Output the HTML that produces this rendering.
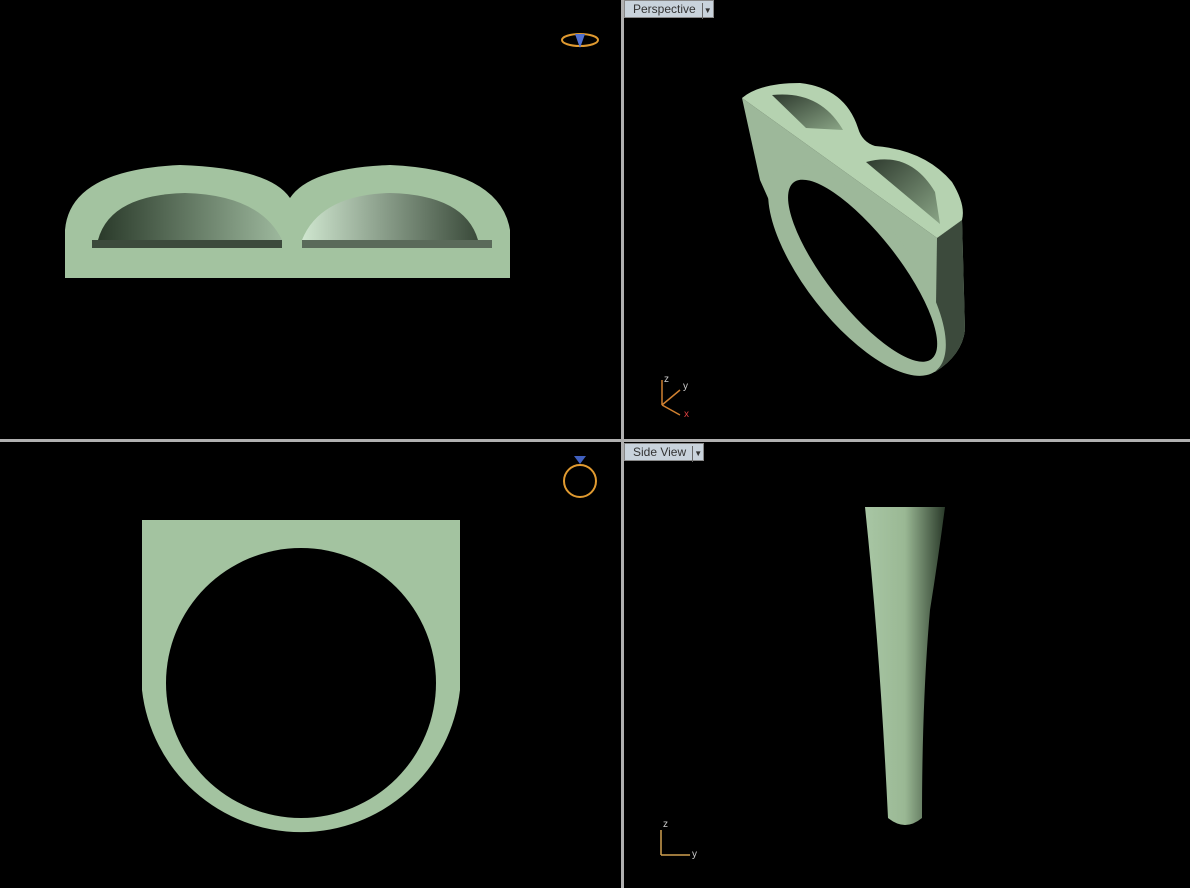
<!DOCTYPE html>
<html><head><style>
body{margin:0;background:#000;width:1190px;height:888px;overflow:hidden;position:relative;font-family:"Liberation Sans",sans-serif}
.lbl{position:absolute;background:#c9d3dc;color:#333;font-size:12px;height:16px;line-height:16px;padding:0 0 0 8px;border:1px solid #888}
.lbl span{display:inline-block;border-left:1px solid #666;width:10px;margin-left:6px;text-align:center;font-size:8px}
</style></head><body>
<svg width="1190" height="888" style="position:absolute;left:0;top:0">
<defs>
<linearGradient id="g1" x1="0" x2="1"><stop offset="0" stop-color="#2a3a2a"/><stop offset="1" stop-color="#9db89d"/></linearGradient>
<linearGradient id="g2" x1="0" x2="1"><stop offset="0" stop-color="#cfe6cf"/><stop offset="1" stop-color="#3a4a3a"/></linearGradient>
<linearGradient id="g3" x1="0" x2="1"><stop offset="0" stop-color="#a8c6a4"/><stop offset="0.5" stop-color="#9ab894"/><stop offset="1" stop-color="#2a3a2a"/></linearGradient>
<linearGradient id="g4" x1="0" x2="1" y1="0" y2="1"><stop offset="0" stop-color="#2e3a2e"/><stop offset="1" stop-color="#8aa586"/></linearGradient>
</defs>
<!-- top-left -->
<path d="M65 278 L65 230 Q70 170 180 165 Q270 168 290 198 Q310 168 390 165 Q500 170 510 230 L510 278Z" fill="#a3c3a0"/>
<path d="M98 240 Q110 195 185 193 Q260 195 282 240Z" fill="url(#g1)"/>
<path d="M302 240 Q320 195 390 193 Q465 195 478 240Z" fill="url(#g2)"/>
<rect x="92" y="240" width="190" height="8" fill="#3c4a3c"/>
<rect x="302" y="240" width="190" height="8" fill="#5a6a5a"/>
<!-- perspective -->
<path d="M742 98 L937 238 L962 220 L965 330 Q962 355 935 372 L900 350 L800 270 L760 180Z" fill="#9db89a"/>
<path d="M937 238 L962 220 L965 330 Q962 355 935 372Z" fill="#3c4a3c"/>
<g transform="translate(857 270) rotate(52)">
<ellipse rx="128" ry="52" fill="#9db89a"/>
<ellipse rx="112" ry="36" cx="4" cy="-4" fill="#000"/>
</g>
<path d="M742 98 Q760 83 800 83 Q845 88 858 128 Q862 142 875 146 Q925 150 952 182 Q966 205 962 220 L937 238 Z" fill="#b5d2b0"/>
<path d="M772 95 Q820 90 843 130 L806 128 Z" fill="url(#g4)"/>
<path d="M866 162 Q910 150 935 192 L940 224 Z" fill="url(#g4)"/>
<!-- bottom-left -->
<path d="M142 520 L460 520 L460 690 A160 160 0 0 1 142 690Z" fill="#a3c3a0"/>
<circle cx="301" cy="683" r="135" fill="#000"/>
<!-- bottom-right -->
<path d="M865 507 L945 507 Q938 560 930 610 Q922 700 922 818 Q905 832 888 818 Q880 650 865 507Z" fill="url(#g3)"/>
<!-- gizmos -->
<ellipse cx="580" cy="40" rx="18" ry="6" fill="none" stroke="#e09a30" stroke-width="2"/>
<path d="M575 34 L585 34 L580 48Z" fill="#5070d0"/>
<circle cx="580" cy="481" r="16" fill="none" stroke="#e09a30" stroke-width="2"/>
<path d="M574 456 L586 456 L580 464Z" fill="#4060c0"/>
<path d="M662 405 L662 380 M662 405 L680 390 M662 405 L680 415" stroke="#d08030" stroke-width="1.5"/>
<path d="M661 855 L661 830 M661 855 L690 855" stroke="#d0a050" stroke-width="1.5"/>
<text x="664" y="382" fill="#ccc" font-size="10">z</text><text x="683" y="389" fill="#ccc" font-size="10">y</text><text x="684" y="417" fill="#e04040" font-size="10">x</text>
<text x="663" y="827" fill="#ccc" font-size="10">z</text><text x="692" y="857" fill="#ccc" font-size="10">y</text>
<!-- dividers -->
<rect x="621" y="0" width="3" height="888" fill="#b0b0b0"/>
<rect x="0" y="439" width="1190" height="3" fill="#b0b0b0"/>
</svg>
<div class="lbl" style="left:624px;top:0">Perspective<span>▼</span></div>
<div class="lbl" style="left:624px;top:443px">Side View<span>▼</span></div>
</body></html>
